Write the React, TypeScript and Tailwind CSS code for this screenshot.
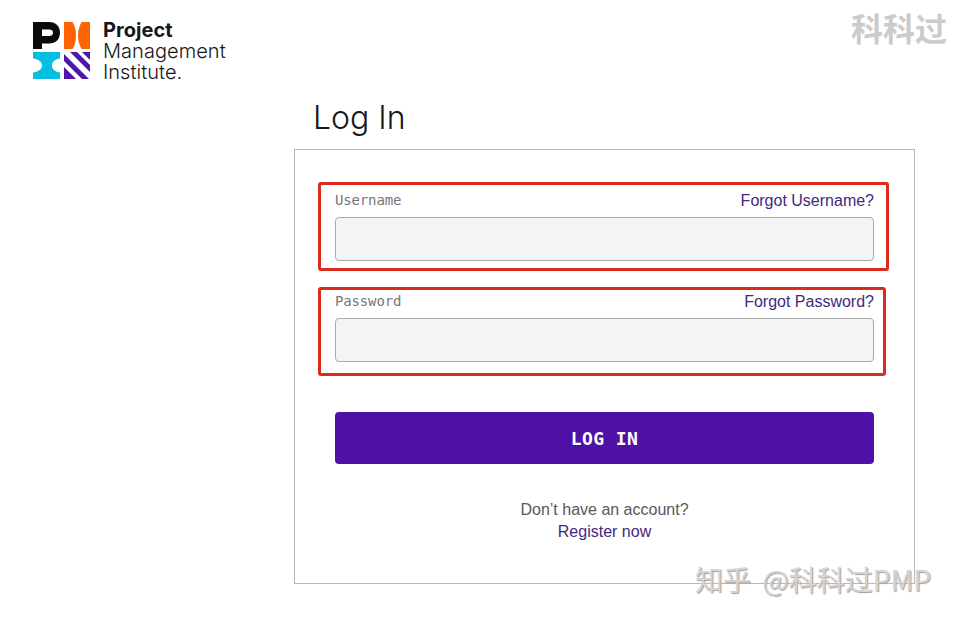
function PmiMark() {
  return (
    <svg width="59" height="59" viewBox="0 0 59 59" className="shrink-0">
      <path
        fillRule="evenodd"
        fill="#0b0b0d"
        d="M0 0H16C23 0 27 4.500 27 10.750C27 17 23 21.500 16 21.500H9V27H0ZM9 7.500V14H16C19 14 20 12.500 20 10.750C20 9 19 7.500 16 7.500Z"
      />
      <path fill="#ff6200" d="M31 0H39.500C42 4 43 8.500 43 13.500C43 18.500 42 23 39.500 27H31Z" />
      <path fill="#ff6200" d="M57 0H48.500C46.500 4 45 8.500 45 13.500C45 18.500 46.500 23 48.500 27H57Z" />
      <path
        fill="#05bfe0"
        d="M0 30H27V36.500C22.500 37 19 39.500 19 43.500C19 47.500 22.500 50 27 50.500V57H0V50.500C5 50 9 47.500 9 43.500C9 39.500 5 37 0 36.500Z"
      />
      <g fill="#4f17a8">
        <path d="M31 32V39L49 57H56Z" />
        <path d="M37 30H44L57 43V50Z" />
        <path d="M49 30H57V38Z" />
        <path d="M31 45V57H43Z" />
      </g>
    </svg>
  );
}

function Field({ label, link, red }: { label: string; link: string; red: string }) {
  return (
    <div className="relative">
      <div className={`pointer-events-none absolute rounded-[3px] border-[3px] border-[#dc2a1f] ${red}`} />
      <div className="flex h-[26px] items-center justify-between">
        <label className="font-['DejaVu_Sans_Mono',monospace] text-[14px] tracking-[-0.15px] text-[#77777b]">{label}</label>
        <a className="mt-[2px] text-[16px] text-[#45287e]">{link}</a>
      </div>
      <input
        type="text"
        className="mt-[4px] block h-[44px] w-full rounded-[4px] border border-[#aaaaaa] bg-[#f4f4f5]"
      />
    </div>
  );
}

export default function App() {
  return (
    <div className="relative h-[618px] w-[957px] overflow-hidden bg-white font-['Liberation_Sans',sans-serif]">
      <header className="flex items-start gap-[11px] pl-[33px] pt-[22px]">
        <PmiMark />
        <div className="-mt-[2px] font-['Inter',sans-serif] text-[20px] leading-[21px] tracking-[0.05px] text-[#17171a]">
          <div className="font-bold">Project</div>
          <div className="font-light">Management</div>
          <div className="font-light">Institute.</div>
        </div>
      </header>

      <main className="ml-[294px] w-[621px]">
        <h1 className="mb-[8px] ml-[19px] mt-[11px] h-[47px] font-['Inter',sans-serif] text-[32px] font-light leading-[47px] text-[#17171a]">
          Log In
        </h1>
        <div className="h-[435px] border border-[#b8b8b8] px-[40px] pt-[37px]">
          <div className="flex flex-col gap-[27px]">
            <Field label="Username" link="Forgot Username?" red="-left-[17px] -right-[15px] -top-[5px] -bottom-[10px]" />
            <Field label="Password" link="Forgot Password?" red="-left-[17px] -right-[12px] -top-[1px] -bottom-[14px]" />
          </div>
          <button className="mt-[50px] h-[52px] w-full rounded-[4px] bg-[#4f10a6] font-['DejaVu_Sans_Mono',monospace] text-[18px] font-bold tracking-[0.4px] text-white">
            LOG IN
          </button>
          <div className="mt-[35px] text-center text-[16px] leading-[22px]">
            <p className="text-[#58585c]">Don’t have an account?</p>
            <a className="text-[#45287e]">Register now</a>
          </div>
        </div>
      </main>

      <div className="absolute left-[851px] top-[5px] font-['Noto_Sans_CJK_SC',sans-serif] text-[32px] font-bold leading-[44px] text-[#cbcbcb]">
        科科过
      </div>
      <div className="absolute left-[695px] top-[559px] font-['Noto_Sans_CJK_SC',sans-serif] text-[28px] leading-[40px] text-[#d4d4d4] [text-shadow:1px_1px_1px_#a0a0a0] [word-spacing:5px]">
        知乎 @科科过PMP
      </div>
    </div>
  );
}
